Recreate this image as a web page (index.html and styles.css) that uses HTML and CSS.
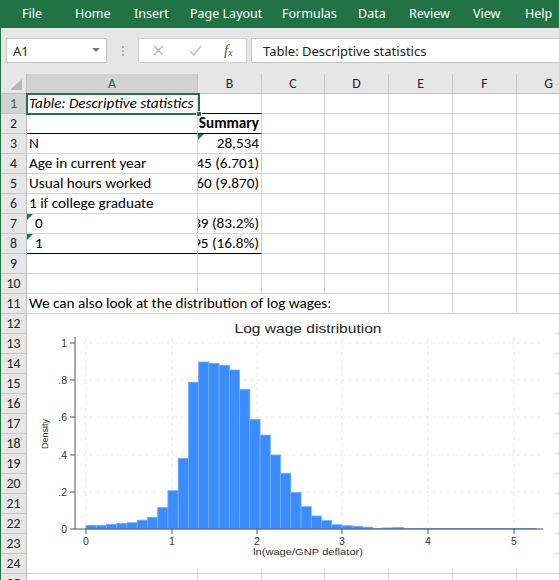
FILE: index.html
```html
<!DOCTYPE html>
<html lang="en">
<head>
    <meta charset="UTF-8">
    <meta name="viewport" content="width=device-width, initial-scale=1.0">
    <title>Descriptive statistics - Excel</title>
    <link rel="stylesheet" href="styles.css">
</head>
<body>
    <div class="ribbon">
        <a class="tab">File</a>
        <a class="tab">Home</a>
        <a class="tab">Insert</a>
        <a class="tab">Page Layout</a>
        <a class="tab">Formulas</a>
        <a class="tab">Data</a>
        <a class="tab">Review</a>
        <a class="tab">View</a>
        <a class="tab">Help</a>
    </div>
    <div class="app">
        <div class="formula-bar">
            <div class="name-box">
                <span>A1</span>
                <svg width="8" height="5" viewBox="0 0 8 5"><path d="M0 0h8L4 4z" fill="#7a7a7a"/></svg>
            </div>
            <div class="grip"><i></i><i></i><i></i></div>
            <div class="fx-buttons">
                <svg class="cancel" width="11" height="11" viewBox="0 0 11 11"><path d="M1 1l9 9M10 1l-9 9" stroke="#b3b3b3" stroke-width="1.3" fill="none"/></svg>
                <svg class="enter" width="13" height="11" viewBox="0 0 13 11"><path d="M1 6l4 4 7-9" stroke="#c2c2c2" stroke-width="1.6" fill="none"/></svg>
                <span class="fx"><i>f</i><sub>x</sub></span>
            </div>
            <div class="formula-input">Table: Descriptive statistics</div>
        </div>

        <div class="sheet">
            <div class="corner"><svg width="12" height="11" viewBox="0 0 12 11"><path d="M12 0v11H0z" fill="#b6b6b6"/></svg></div>
            <div class="ch sel">A</div>
            <div class="ch">B</div>
            <div class="ch">C</div>
            <div class="ch">D</div>
            <div class="ch">E</div>
            <div class="ch">F</div>
            <div class="ch">G</div>

            <div class="rh sel">1</div>
            <div class="c bb"><em>Table: Descriptive statistics</em></div>
            <div class="c bb"></div><div class="c"></div><div class="c"></div><div class="c"></div><div class="c"></div><div class="c"></div>

            <div class="rh">2</div>
            <div class="c bb"></div>
            <div class="c bb num"><b>Summary</b></div>
            <div class="c"></div><div class="c"></div><div class="c"></div><div class="c"></div><div class="c"></div>

            <div class="rh">3</div>
            <div class="c">N</div>
            <div class="c num err"><span>28,534</span></div>
            <div class="c"></div><div class="c"></div><div class="c"></div><div class="c"></div><div class="c"></div>

            <div class="rh">4</div>
            <div class="c">Age in current year</div>
            <div class="c num"><span>38.945 (6.701)</span></div>
            <div class="c"></div><div class="c"></div><div class="c"></div><div class="c"></div><div class="c"></div>

            <div class="rh">5</div>
            <div class="c">Usual hours worked</div>
            <div class="c num"><span>40.560 (9.870)</span></div>
            <div class="c"></div><div class="c"></div><div class="c"></div><div class="c"></div><div class="c"></div>

            <div class="rh">6</div>
            <div class="c">1 if college graduate</div>
            <div class="c"></div><div class="c"></div><div class="c"></div><div class="c"></div><div class="c"></div><div class="c"></div>

            <div class="rh">7</div>
            <div class="c err indent">0</div>
            <div class="c num"><span>23,739 (83.2%)</span></div>
            <div class="c"></div><div class="c"></div><div class="c"></div><div class="c"></div><div class="c"></div>

            <div class="rh">8</div>
            <div class="c err indent bb">1</div>
            <div class="c num bb"><span>4,795 (16.8%)</span></div>
            <div class="c"></div><div class="c"></div><div class="c"></div><div class="c"></div><div class="c"></div>

            <div class="rh">9</div>
            <div class="c"></div><div class="c"></div><div class="c"></div><div class="c"></div><div class="c"></div><div class="c"></div><div class="c"></div>

            <div class="rh">10</div>
            <div class="c"></div><div class="c"></div><div class="c"></div><div class="c"></div><div class="c"></div><div class="c"></div><div class="c"></div>

            <div class="rh">11</div>
            <div class="c span4">We can also look at the distribution of log wages:</div>
            <div class="c"></div><div class="c"></div><div class="c"></div>

            <div class="rh">12</div>
            <div class="c"></div><div class="c"></div><div class="c"></div><div class="c"></div><div class="c"></div><div class="c"></div><div class="c"></div>
            <div class="rh">13</div>
            <div class="c"></div><div class="c"></div><div class="c"></div><div class="c"></div><div class="c"></div><div class="c"></div><div class="c"></div>
            <div class="rh">14</div>
            <div class="c"></div><div class="c"></div><div class="c"></div><div class="c"></div><div class="c"></div><div class="c"></div><div class="c"></div>
            <div class="rh">15</div>
            <div class="c"></div><div class="c"></div><div class="c"></div><div class="c"></div><div class="c"></div><div class="c"></div><div class="c"></div>
            <div class="rh">16</div>
            <div class="c"></div><div class="c"></div><div class="c"></div><div class="c"></div><div class="c"></div><div class="c"></div><div class="c"></div>
            <div class="rh">17</div>
            <div class="c"></div><div class="c"></div><div class="c"></div><div class="c"></div><div class="c"></div><div class="c"></div><div class="c"></div>
            <div class="rh">18</div>
            <div class="c"></div><div class="c"></div><div class="c"></div><div class="c"></div><div class="c"></div><div class="c"></div><div class="c"></div>
            <div class="rh">19</div>
            <div class="c"></div><div class="c"></div><div class="c"></div><div class="c"></div><div class="c"></div><div class="c"></div><div class="c"></div>
            <div class="rh">20</div>
            <div class="c"></div><div class="c"></div><div class="c"></div><div class="c"></div><div class="c"></div><div class="c"></div><div class="c"></div>
            <div class="rh">21</div>
            <div class="c"></div><div class="c"></div><div class="c"></div><div class="c"></div><div class="c"></div><div class="c"></div><div class="c"></div>
            <div class="rh">22</div>
            <div class="c"></div><div class="c"></div><div class="c"></div><div class="c"></div><div class="c"></div><div class="c"></div><div class="c"></div>
            <div class="rh">23</div>
            <div class="c"></div><div class="c"></div><div class="c"></div><div class="c"></div><div class="c"></div><div class="c"></div><div class="c"></div>
            <div class="rh">24</div>
            <div class="c"></div><div class="c"></div><div class="c"></div><div class="c"></div><div class="c"></div><div class="c"></div><div class="c"></div>
            <div class="rh">25</div>
            <div class="c"></div><div class="c"></div><div class="c"></div><div class="c"></div><div class="c"></div><div class="c"></div><div class="c"></div>

            <!-- active cell A1 -->
            <div class="selection"><span class="handle"></span></div>

            <!-- pasted Stata graph -->
            <div class="chart">
                <svg width="528" height="254" viewBox="27 314 528 254">
                    <rect x="27" y="314" width="528" height="254" fill="#fff"/>
                    <text class="title" x="308" y="333" text-anchor="middle" textLength="147" lengthAdjust="spacingAndGlyphs">Log wage distribution</text>

                    <path class="gridline" d="M86 338V529M172 338V529M257 338V529M342 338V529M428 338V529M514 338V529M75 343H543M75 380H543M75 417H543M75 455H543M75 492H543"/>

                    <g class="bars">
                        <rect x="86.00" y="525.3" width="10.24" height="3.7"/>
                        <rect x="96.24" y="525.3" width="10.24" height="3.7"/>
                        <rect x="106.48" y="524.3" width="10.24" height="4.7"/>
                        <rect x="116.72" y="523.4" width="10.24" height="5.6"/>
                        <rect x="126.96" y="522.7" width="10.24" height="6.3"/>
                        <rect x="137.20" y="520.1" width="10.24" height="8.9"/>
                        <rect x="147.44" y="517.3" width="10.24" height="11.7"/>
                        <rect x="157.68" y="507.6" width="10.24" height="21.4"/>
                        <rect x="167.92" y="490.7" width="10.24" height="38.3"/>
                        <rect x="178.16" y="458.3" width="10.24" height="70.7"/>
                        <rect x="188.40" y="382.2" width="10.24" height="146.8"/>
                        <rect x="198.64" y="362.0" width="10.24" height="167.0"/>
                        <rect x="208.88" y="363.3" width="10.24" height="165.7"/>
                        <rect x="219.12" y="365.3" width="10.24" height="163.7"/>
                        <rect x="229.36" y="370.0" width="10.24" height="159.0"/>
                        <rect x="239.60" y="389.3" width="10.24" height="139.7"/>
                        <rect x="249.84" y="419.3" width="10.24" height="109.7"/>
                        <rect x="260.08" y="435.1" width="10.24" height="93.9"/>
                        <rect x="270.32" y="455.0" width="10.24" height="74.0"/>
                        <rect x="280.56" y="473.2" width="10.24" height="55.8"/>
                        <rect x="290.80" y="492.4" width="10.24" height="36.6"/>
                        <rect x="301.04" y="506.7" width="10.24" height="22.3"/>
                        <rect x="311.28" y="516.0" width="10.24" height="13.0"/>
                        <rect x="321.52" y="520.6" width="10.24" height="8.4"/>
                        <rect x="331.76" y="524.7" width="10.24" height="4.3"/>
                        <rect x="342.00" y="525.7" width="10.24" height="3.3"/>
                        <rect x="352.24" y="526.2" width="10.24" height="2.8"/>
                        <rect x="362.48" y="527.1" width="10.24" height="1.9"/>
                        <rect x="372.72" y="528.4" width="10.24" height="0.6"/>
                        <rect x="382.96" y="527.9" width="10.24" height="1.1"/>
                        <rect x="393.20" y="527.5" width="10.24" height="1.5"/>
                        <rect x="403.44" y="528.4" width="133.12" height="0.6"/>
                    </g>

                    <path class="axis" d="M75 337V529H543M70 343H75M70 380H75M70 417H75M70 455H75M70 492H75M70 529H75M86 529V534M172 529V534M257 529V534M342 529V534M428 529V534M514 529V534"/>

                    <g class="ticks" text-anchor="end">
                        <text x="67" y="347">1</text>
                        <text x="67" y="384">.8</text>
                        <text x="67" y="421">.6</text>
                        <text x="67" y="459">.4</text>
                        <text x="67" y="496">.2</text>
                        <text x="67" y="533">0</text>
                    </g>
                    <g class="ticks" text-anchor="middle">
                        <text x="86" y="545">0</text>
                        <text x="172" y="545">1</text>
                        <text x="257" y="545">2</text>
                        <text x="342" y="545">3</text>
                        <text x="428" y="545">4</text>
                        <text x="514" y="545">5</text>
                    </g>
                    <text class="axis-title" x="308" y="555" text-anchor="middle" textLength="110" lengthAdjust="spacingAndGlyphs">ln(wage/GNP deflator)</text>
                    <text class="ytitle" x="48" y="434" text-anchor="middle" transform="rotate(-90 48 434)">Density</text>
                </svg>
            </div>
        </div>
    </div>
</body>
</html>
```

FILE: styles.css
```css
* {
    padding: 0;
    margin: 0;
    box-sizing: border-box;
}

body {
    width: 559px;
    height: 580px;
    overflow: hidden;
    background: #fff;
    font-family: "Segoe UI", "Noto Sans", sans-serif;
}

/* ribbon tabs */
.ribbon {
    height: 28px;
    display: grid;
    grid-template-columns: 53px 59px 56px 92px 76px 51px 64px 52px auto;
    align-items: center;
    padding: 0 0 2px 22px;
    background: #217346;
    color: #fff;
    font-size: 12.5px;
    white-space: nowrap;
}

.app {
    border-left: 1px solid #217346;
}

/* name box + formula bar */
.formula-bar {
    height: 46px;
    display: flex;
    align-items: flex-start;
    padding: 10px 0 0 5px;
    background: #e6e6e6;
}

.name-box {
    width: 101px;
    height: 25px;
    display: flex;
    align-items: center;
    justify-content: space-between;
    padding: 0 6px;
    background: #fff;
    border: 1px solid #c6c6c6;
    font-size: 13px;
    color: #222;
}

.grip {
    display: flex;
    flex-direction: column;
    gap: 2px;
    margin: 8px 14px 0 15px;
}

.grip i {
    width: 2px;
    height: 2px;
    background: #a9a9a9;
}

.fx-buttons {
    width: 109px;
    height: 25px;
    display: flex;
    align-items: center;
    background: #fff;
    border: 1px solid #d2d2d2;
}

.fx-buttons .cancel {
    margin-left: 14px;
}

.fx-buttons .enter {
    margin-left: 25px;
}

.fx {
    margin-left: 22px;
    font-family: "Liberation Serif", serif;
    font-size: 15px;
    color: #555;
}

.fx sub {
    font-size: 10px;
    font-style: italic;
    vertical-align: -1px;
}

.formula-input {
    flex: 1;
    height: 25px;
    margin: 0 -10px 0 4px;
    padding-left: 11px;
    display: flex;
    align-items: center;
    background: #fff;
    border: 1px solid #c6c6c6;
    font-size: 13px;
    color: #222;
}

/* worksheet */
.sheet {
    position: relative;
    display: grid;
    grid-template-columns: 26px 171px 64px 63px 64px 64px 64px 64px;
    grid-auto-rows: 20px;
    font-family: Calibri, Carlito, Lato, sans-serif;
    font-size: 15.2px;
    color: #000;
}

.corner {
    display: flex;
    align-items: flex-end;
    justify-content: flex-end;
    padding: 0 4px 3px 0;
    background: #e6e6e6;
    border-right: 1px solid #bdbdbd;
    border-bottom: 1px solid #bdbdbd;
}

.ch,
.rh {
    display: flex;
    align-items: center;
    justify-content: center;
    background: #e6e6e6;
    font-size: 13.8px;
    color: #222;
}

.ch {
    border-right: 1px solid #c6c6c6;
    border-bottom: 1px solid #bdbdbd;
}

.rh {
    border-right: 1px solid #bdbdbd;
    border-bottom: 1px solid #c6c6c6;
}

.ch.sel,
.rh.sel {
    background: #d2d2d2;
    color: #217346;
}

.c {
    display: flex;
    align-items: flex-end;
    padding: 0 2px 1px;
    border-right: 1px solid #d4d4d4;
    border-bottom: 1px solid #d4d4d4;
    white-space: nowrap;
    overflow: hidden;
}

.c.num {
    justify-content: flex-end;
}

.c.num span {
    flex-shrink: 0;
}

.c.bb {
    border-bottom-color: #000;
}

.c.indent {
    padding-left: 8px;
}

.c.span4 {
    grid-column: span 4;
}

/* green error indicator */
.c.err {
    position: relative;
}

.c.err::before {
    content: "";
    position: absolute;
    left: 0;
    top: 0;
    border-top: 6px solid #1f7a3c;
    border-right: 6px solid transparent;
}

.selection {
    position: absolute;
    left: 25px;
    top: 19px;
    width: 174px;
    height: 22px;
    border: 2px solid #217346;
}

.selection .handle {
    position: absolute;
    right: -4px;
    bottom: -4px;
    width: 6px;
    height: 6px;
    background: #217346;
    border: 1px solid #fff;
}

.chart {
    position: absolute;
    left: 26px;
    top: 240px;
    width: 528px;
    height: 254px;
}

.chart svg {
    display: block;
}

.chart text {
    font-family: "Liberation Sans", Arial, sans-serif;
    fill: #333;
}

.chart .title {
    font-size: 13px;
    fill: #222;
}

.gridline {
    fill: none;
    stroke: #e8e8e8;
    stroke-width: 1;
    stroke-dasharray: 4 3;
}

.bars rect {
    fill: #3a8cff;
    stroke: #74adff;
    stroke-width: 0.8;
}

.axis {
    fill: none;
    stroke: #555;
    stroke-width: 1;
}

.ticks text {
    font-size: 10.5px;
}

.axis-title {
    font-size: 9.5px;
}

.ytitle {
    font-size: 9px;
}
```
